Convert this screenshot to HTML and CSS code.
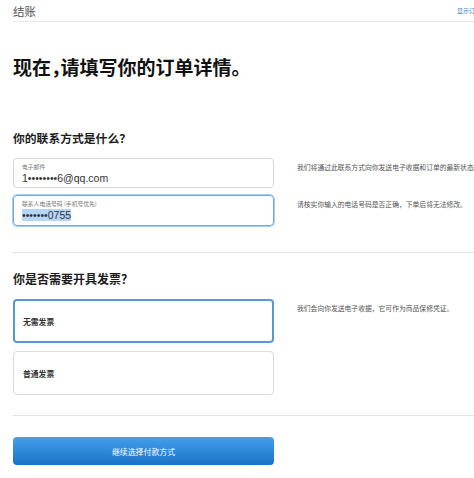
FILE: index.html
```html
<!DOCTYPE html>
<html lang="zh-CN">
<head>
<meta charset="utf-8">
<title>结账</title>
<link rel="stylesheet" href="styles.css">
</head>
<body>
<header class="topbar">
  <span class="topbar-title">结账</span>
  <a class="topbar-link" href="#">显示订单摘要</a>
</header>

<main class="page">
  <h1 class="page-title">现在<span class="half">，</span>请填写你的订单详情。</h1>

  <section class="section section-contact">
    <h2 class="section-title">你的联系方式是什么<span class="half">？</span></h2>
    <div class="row">
      <div class="field">
        <span class="field-label">电子邮件</span>
        <span class="field-value">1••••••••6@qq.com</span>
      </div>
      <p class="note">我们将通过此联系方式向你发送电子收据和订单的最新状态。</p>
    </div>
    <div class="row">
      <div class="field field-focus">
        <span class="field-label">联系人电话号码 (手机号优先)</span>
        <span class="field-value"><span class="selected">•••••••0755</span></span>
      </div>
      <p class="note">请核实你输入的电话号码是否正确，下单后将无法修改。</p>
    </div>
  </section>

  <section class="section section-invoice">
    <h2 class="section-title">你是否需要开具发票？</h2>
    <div class="row">
      <div class="options">
        <div class="option option-active">无需发票</div>
        <div class="option">普通发票</div>
      </div>
      <p class="note">我们会向你发送电子收据，它可作为商品保修凭证。</p>
    </div>
  </section>

  <section class="section section-action">
    <div class="row">
      <button class="btn-continue" type="button">继续选择付款方式</button>
    </div>
  </section>
</main>
</body>
</html>
```

FILE: styles.css
```css
html, body {
  margin: 0;
  padding: 0;
  background: #fff;
  overflow: hidden;
}
body {
  width: 474px;
  font-family: "Noto Sans CJK SC", "Noto Sans", "Liberation Sans", sans-serif;
  color: #1d1d1f;
}

.half {
  font-feature-settings: "halt";
}

.topbar {
  margin-left: 13px;
  height: 21px;
  border-bottom: 1px solid #e9e9e9;
  display: flex;
  align-items: center;
  overflow: hidden;
}
.topbar-title {
  font-size: 11.5px;
  color: #555;
  line-height: 18px;
}
.topbar-link {
  margin-left: auto;
  flex: none;
  width: 17px;
  overflow: hidden;
  font-size: 6px;
  line-height: 10px;
  color: #3b7fc4;
  text-decoration: none;
  white-space: nowrap;
}

.page {
  padding-left: 13px;
}

.page-title {
  margin: 32px 0 0;
  font-size: 19px;
  line-height: 26px;
  font-weight: 700;
  color: #111;
}

.section-title {
  margin: 0 0 11px;
  font-size: 11.8px;
  line-height: 18px;
  font-weight: 700;
  color: #1d1d1f;
}

.section-contact {
  margin-top: 49px;
  padding-bottom: 26px;
  border-bottom: 1px solid #e6e6e6;
}

.row {
  display: grid;
  grid-template-columns: 261px 1fr;
  column-gap: 23px;
  margin-bottom: 7px;
}
.row:last-child {
  margin-bottom: 0;
}

.field {
  box-sizing: border-box;
  height: 30px;
  border: 1px solid #d8d8d8;
  border-radius: 4px;
  padding: 4px 8px 0;
  display: flex;
  flex-direction: column;
}
.field-focus {
  height: 31px;
  border: 1px solid #6fa9e0;
  box-shadow: 0 0 0 1px #a8cdf0;
}
.field-label {
  font-size: 5.8px;
  line-height: 8px;
  color: #777;
}
.field-value {
  font-family: "Liberation Sans", "Noto Sans", sans-serif;
  font-size: 10.5px;
  line-height: 14px;
  color: #333;
}
.selected {
  background: #b5d5f7;
}

.note {
  margin: 0;
  padding-top: 4px;
  font-size: 6.8px;
  line-height: 10px;
  color: #555;
  white-space: nowrap;
  overflow: hidden;
}

.section-invoice {
  padding-top: 17px;
  padding-bottom: 20px;
  border-bottom: 1px solid #e6e6e6;
}
.section-invoice .section-title {
  font-size: 12px;
  margin-bottom: 11px;
}
.options {
  display: flex;
  flex-direction: column;
  gap: 8px;
}
.option {
  box-sizing: border-box;
  height: 44px;
  border: 1px solid #dcdcdc;
  border-radius: 4px;
  padding-left: 9px;
  display: flex;
  align-items: center;
  font-size: 7.8px;
  font-weight: 700;
  color: #333;
}
.option-active {
  border: 2px solid #5a97d2;
  padding-left: 8px;
}
.section-invoice .note {
  padding-top: 4px;
}

.section-action {
  padding-top: 21px;
}
.btn-continue {
  height: 28px;
  border: 0;
  border-radius: 4px;
  background: linear-gradient(#42a0ec, #1b72c8);
  color: #fff;
  font-family: "Noto Sans CJK SC", sans-serif;
  font-size: 7.9px;
  padding: 0;
  cursor: pointer;
}
```
